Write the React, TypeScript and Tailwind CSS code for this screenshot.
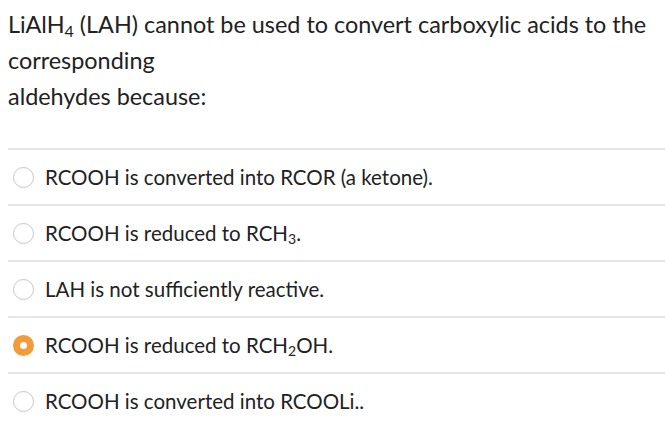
import React from "react";

const sub = "text-[14px] relative top-[3px] leading-none";

const options: { key: string; node: React.ReactNode; selected?: boolean }[] = [
  { key: "a", node: <>RCOOH is converted into RCOR (a ketone).</> },
  { key: "b", node: <>RCOOH is reduced to RCH<span className={sub}>3</span>.</> },
  { key: "c", node: <>LAH is not sufficiently reactive.</> },
  { key: "d", node: <>RCOOH is reduced to RCH<span className={sub}>2</span>OH.</>, selected: true },
  { key: "e", node: <>RCOOH is converted into RCOOLi..</> },
];

export default function App() {
  return (
    <div className="w-[665px] h-[444px] bg-white overflow-hidden" style={{ fontFamily: "Lato, 'Open Sans', sans-serif" }}>
      <div className="pl-[8px] pt-[6px] text-[23.4px] leading-[36px] text-[#222222]">
        <div>
          LiAlH<span className="text-[16px] relative top-[4px] leading-none">4</span> (LAH) cannot be used to convert carboxylic acids to the
        </div>
        <div>corresponding</div>
        <div>aldehydes because:</div>
      </div>
      <div className="mt-[34px] ml-[8px]">
        {options.map((o) => (
          <div key={o.key} className="border-t-2 border-[#e6e6e6] h-[56px] flex items-center">
            {o.selected ? (
              <span className="ml-[5px] w-[21px] h-[21px] rounded-full bg-[#f29b38] flex items-center justify-center shrink-0">
                <span className="w-[7px] h-[7px] rounded-full bg-white" />
              </span>
            ) : (
              <span className="ml-[5px] w-[21px] h-[21px] rounded-full border border-[#c8c8c8] bg-white shrink-0" />
            )}
            <span className="ml-[11px] text-[20.5px] text-[#222222] leading-none">{o.node}</span>
          </div>
        ))}
      </div>
    </div>
  );
}
